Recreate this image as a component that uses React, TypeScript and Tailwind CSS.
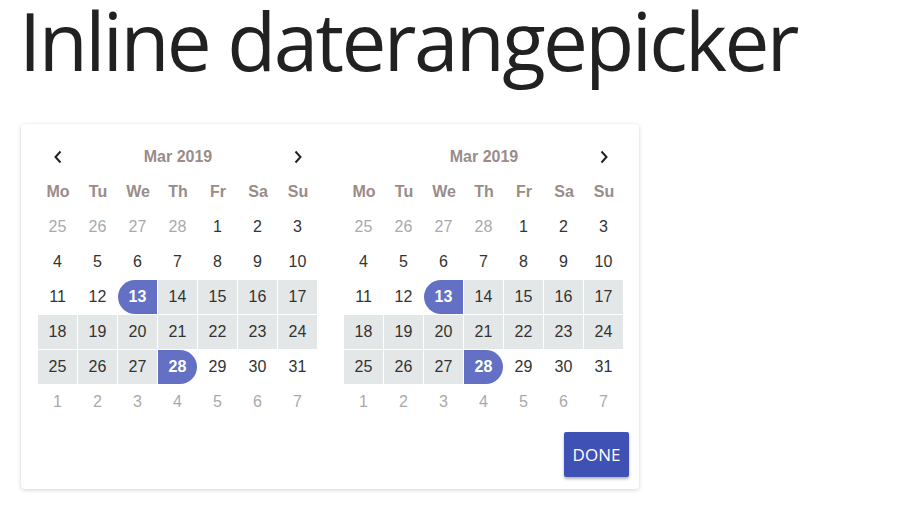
import React from 'react'

type Day = { n: number; muted?: boolean; start?: boolean; end?: boolean; inRange?: boolean }

function buildMonth(): Day[] {
  const days: Day[] = []
  for (const n of [25, 26, 27, 28]) days.push({ n, muted: true })
  for (let n = 1; n <= 31; n++) {
    days.push({ n, start: n === 13, end: n === 28, inRange: n > 13 && n < 28 })
  }
  for (let n = 1; n <= 7; n++) days.push({ n, muted: true })
  return days
}

const WEEKDAYS = ['Mo', 'Tu', 'We', 'Th', 'Fr', 'Sa', 'Su']

function Chevron({ dir }: { dir: 'left' | 'right' }) {
  return (
    <svg width="10" height="14" viewBox="0 0 10 14" fill="none">
      <path
        d={dir === 'left' ? 'M7.5 1.5L2.5 7l5 5.5' : 'M2.5 1.5L7.5 7l-5 5.5'}
        stroke="#222"
        strokeWidth="2"
      />
    </svg>
  )
}

function DayCell({ day }: { day: Day }) {
  let box = 'text-[#333]'
  if (day.muted) box = 'text-[#aaa]'
  if (day.inRange) box = 'bg-[#e4e7e7] text-[#333]'
  if (day.start) box = 'bg-[#6370c4] text-white font-bold rounded-l-full'
  if (day.end) box = 'bg-[#6370c4] text-white font-bold rounded-r-full'
  return (
    <div className="w-10 h-[35px]">
      <div className={`w-[39px] h-[34px] flex items-center justify-center ${box}`}>{day.n}</div>
    </div>
  )
}

function Month({ showPrev }: { showPrev: boolean }) {
  const days = buildMonth()
  return (
    <div className="w-[280px]">
      <div className="grid grid-cols-7 h-[35px] items-center">
        <div className="flex justify-center">{showPrev && <Chevron dir="left" />}</div>
        <div className="col-span-5 text-center font-bold text-[#998c89]">Mar 2019</div>
        <div className="flex justify-center">
          <Chevron dir="right" />
        </div>
      </div>
      <div className="grid grid-cols-7 h-[35px] items-center">
        {WEEKDAYS.map((w) => (
          <div key={w} className="text-center font-bold text-[#998c89]">
            {w}
          </div>
        ))}
      </div>
      <div className="grid grid-cols-7">
        {days.map((d, i) => (
          <DayCell key={i} day={d} />
        ))}
      </div>
    </div>
  )
}

export default function App() {
  return (
    <div className="bg-white min-h-screen px-[21px] pt-px">
      <h1
        className="text-[80px] leading-[1.36] font-normal text-[#212121] ml-[-2px] tracking-[-2.6px] -mt-[15px] mb-[29px]"
        style={{ fontFamily: '"Open Sans", sans-serif' }}
      >
        Inline daterangepicker
      </h1>
      <div
        className="w-[618px] h-[365px] rounded-[4px] bg-white shadow-[0_1px_4px_rgba(0,0,0,0.18)] pt-4 pl-[17px] pr-[10px] text-[16px]"
        style={{ fontFamily: '"Liberation Sans", Arial, sans-serif' }}
      >
        <div className="flex gap-[26px]">
          <Month showPrev={true} />
          <Month showPrev={false} />
        </div>
        <div className="flex justify-end mt-3">
          <button
            className="w-[65px] h-[45px] bg-[#3f51b5] text-white text-[17px] rounded-[2px] shadow-[0_2px_3px_rgba(0,0,0,0.3)]"
            style={{ fontFamily: '"Open Sans", sans-serif' }}
          >
            DONE
          </button>
        </div>
      </div>
    </div>
  )
}
